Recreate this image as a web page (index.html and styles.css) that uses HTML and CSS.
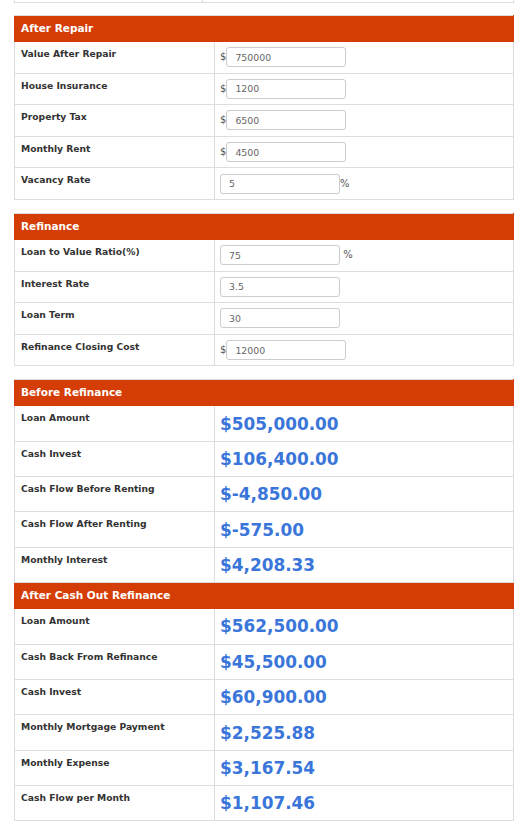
FILE: index.html
```html
<!DOCTYPE html>
<html>
<head>
  <meta charset="UTF-8">
  <link rel="stylesheet" href="styles.css">
</head>
<body>
  <div class="page">

    <table class="calc stub">
      <tr><td class="label"></td><td class="field"></td></tr>
    </table>

    <table class="calc">
      <tr><th colspan="2">After Repair</th></tr>
      <tr class="in-row"><td class="label">Value After Repair</td><td class="field">$<input class="num" value="750000"></td></tr>
      <tr class="in-row"><td class="label">House Insurance</td><td class="field">$<input class="num" value="1200"></td></tr>
      <tr class="in-row"><td class="label">Property Tax</td><td class="field">$<input class="num" value="6500"></td></tr>
      <tr class="in-row"><td class="label">Monthly Rent</td><td class="field">$<input class="num" value="4500"></td></tr>
      <tr class="in-row"><td class="label">Vacancy Rate</td><td class="field"><input class="num" value="5">%</td></tr>
    </table>

    <table class="calc">
      <tr><th colspan="2">Refinance</th></tr>
      <tr class="in-row"><td class="label">Loan to Value Ratio(%)</td><td class="field"><input class="num" value="75"> %</td></tr>
      <tr class="in-row"><td class="label">Interest Rate</td><td class="field"><input class="num" value="3.5"></td></tr>
      <tr class="in-row"><td class="label">Loan Term</td><td class="field"><input class="num" value="30"></td></tr>
      <tr class="in-row"><td class="label">Refinance Closing Cost</td><td class="field">$<input class="num" value="12000"></td></tr>
    </table>

    <table class="calc">
      <tr><th colspan="2">Before Refinance</th></tr>
      <tr class="out-row"><td class="label">Loan Amount</td><td class="result">$505,000.00</td></tr>
      <tr class="out-row"><td class="label">Cash Invest</td><td class="result">$106,400.00</td></tr>
      <tr class="out-row"><td class="label">Cash Flow Before Renting</td><td class="result">$-4,850.00</td></tr>
      <tr class="out-row"><td class="label">Cash Flow After Renting</td><td class="result">$-575.00</td></tr>
      <tr class="out-row"><td class="label">Monthly Interest</td><td class="result">$4,208.33</td></tr>
      <tr><th colspan="2">After Cash Out Refinance</th></tr>
      <tr class="out-row"><td class="label">Loan Amount</td><td class="result">$562,500.00</td></tr>
      <tr class="out-row"><td class="label">Cash Back From Refinance</td><td class="result">$45,500.00</td></tr>
      <tr class="out-row"><td class="label">Cash Invest</td><td class="result">$60,900.00</td></tr>
      <tr class="out-row"><td class="label">Monthly Mortgage Payment</td><td class="result">$2,525.88</td></tr>
      <tr class="out-row"><td class="label">Monthly Expense</td><td class="result">$3,167.54</td></tr>
      <tr class="out-row"><td class="label">Cash Flow per Month</td><td class="result">$1,107.46</td></tr>
    </table>

  </div>
</body>
</html>
```

FILE: styles.css
```css
body{
  margin: 0;
  background-color: white;
  font-family: "DejaVu Sans", Verdana, sans-serif;
  color: #333;
}
.page{
  padding: 0 10px 20px 14px;
}
.calc{
  width: 500px;
  border-collapse: collapse;
  margin-bottom: 13px;
}
.calc th{
  background-color: #d53d07;
  color: white;
  font-size: 10.5px;
  line-height: 13px;
  font-weight: bold;
  text-align: left;
  padding: 6px 6px;
  border: 1px solid #d53d07;
  border-top-color: #ddd;
}
.calc td{
  border: 1px solid #ddd;
}
.label{
  width: 187px;
  vertical-align: top;
  font-size: 9.2px;
  font-weight: bold;
  line-height: 11px;
  padding: 6px 6px 0 6px;
}
.field{
  vertical-align: middle;
  font-size: 10px;
  color: #555;
  padding: 5.3px 5px;
}
.num{
  width: 120px;
  height: 20px;
  box-sizing: border-box;
  border: 1px solid #ccc;
  border-radius: 3px;
  padding: 0 0 0 8px;
  margin: 0;
  font-family: "DejaVu Sans", Verdana, sans-serif;
  font-size: 9.4px;
  color: #666;
  vertical-align: middle;
}
.result{
  color: #3a76da;
  font-size: 16.9px;
  font-weight: bold;
  line-height: 18px;
  padding: 8.2px 5px;
  vertical-align: top;
}
.stub{
  margin-bottom: 12px;
}
.stub td{
  border-top: none;
  height: 2px;
  padding: 0;
}
```
